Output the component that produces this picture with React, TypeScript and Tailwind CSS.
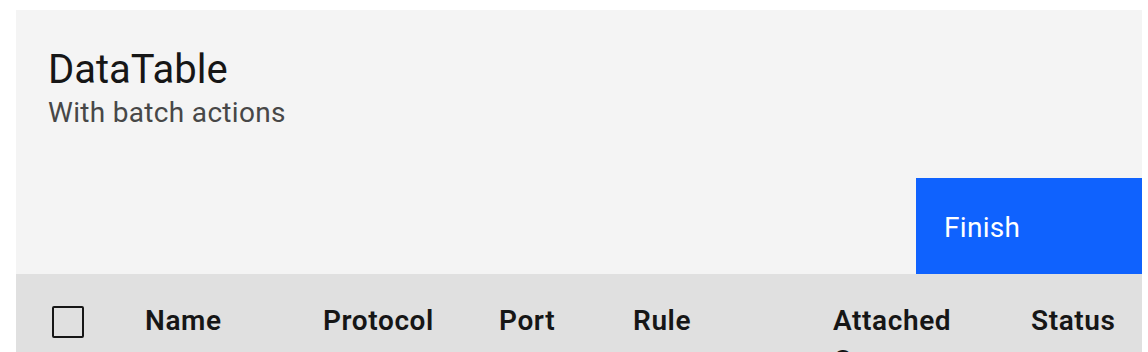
export default function App() {
  const columns = [
    { label: "Name" },
    { label: "Protocol" },
    { label: "Port" },
    { label: "Rule" },
    { label: "Attached Groups" },
    { label: "Status" },
  ];

  return (
    <div
      className="h-[352px] w-full overflow-hidden bg-white pl-4 pr-[6px] pt-[10px] text-[#161616]"
      style={{ fontFamily: "Roboto, 'Noto Sans', sans-serif" }}
    >
      <section className="bg-[#f4f4f4]">
        <div className="h-[168px] pl-8 pt-[36px]">
          <h2 className="text-[40px] leading-[48px] font-normal">DataTable</h2>
          <p className="mt-[1px] text-[28px] leading-[36px] tracking-[0.32px] text-[#474747]">
            With batch actions
          </p>
        </div>

        <div className="flex h-24 justify-end">
          <button className="flex w-[226px] items-center bg-[#0f62fe] pl-[28px] pt-[3px] text-[28px] tracking-[0.32px] text-white">
            Finish
          </button>
        </div>

        <div className="grid h-24 grid-cols-[97px_178px_176px_134px_200px_198px_1fr] bg-[#e0e0e0]">
          <div className="pl-[36px] pt-8">
            <div className="h-8 w-8 rounded-[2px] border-2 border-[#161616]" />
          </div>
          {columns.map((col) => (
            <div
              key={col.label}
              className="pl-[32px] pr-4 pt-[27px] text-[28px] leading-[40px] font-semibold tracking-[0.6px]"
            >
              {col.label}
            </div>
          ))}
        </div>
      </section>
    </div>
  );
}
